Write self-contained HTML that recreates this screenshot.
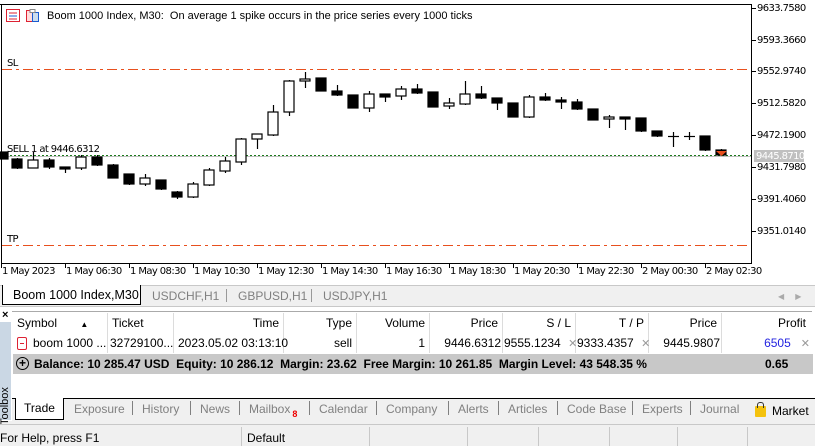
<!DOCTYPE html>
<html><head><meta charset="utf-8"><style>
*{margin:0;padding:0;box-sizing:border-box}
body{width:815px;height:446px;background:#f0f0f0;font-family:"Liberation Sans",sans-serif;position:relative;overflow:hidden;color:#000}
.a{position:absolute;white-space:nowrap}
.ax{font-size:10px;font-family:"DejaVu Sans","Liberation Sans",sans-serif;letter-spacing:-0.6px}
.t{font-size:12px}
.col{position:absolute;top:0;height:20px;border-right:1px solid #dcdcdc;font-size:12px;line-height:20px;padding:0 4px}
.g{color:#808080}
.bt{position:absolute;top:402px;font-size:12px;color:#808080}
.sp{position:absolute;top:401px;width:1px;height:14px;background:#808080}
</style></head><body>
<div class="a" style="left:0;top:0;width:815px;height:285px;background:#fff"></div>
<svg class="a" style="left:0;top:0" width="815" height="285">
<line x1="0" y1="4.5" x2="752" y2="4.5" stroke="#000"/>
<line x1="1.5" y1="4" x2="1.5" y2="264" stroke="#000"/>
<line x1="751.5" y1="4" x2="751.5" y2="264" stroke="#000"/>
<line x1="1" y1="263.5" x2="752" y2="263.5" stroke="#000"/>
<line x1="2" y1="69.5" x2="751" y2="69.5" stroke="#e8501e" stroke-dasharray="10,4,3,4"/>
<line x1="2" y1="245.5" x2="751" y2="245.5" stroke="#e8501e" stroke-dasharray="10,4,3,4"/>
<line x1="2" y1="156.5" x2="751" y2="156.5" stroke="#c0c0c0"/>
<line x1="2" y1="155.5" x2="751" y2="155.5" stroke="#1a7a1a" stroke-dasharray="2,2"/>
<g stroke="#000" stroke-width="1">
<line x1="752" y1="8.5" x2="756" y2="8.5"/><line x1="752" y1="40.5" x2="756" y2="40.5"/><line x1="752" y1="71.5" x2="756" y2="71.5"/><line x1="752" y1="103.5" x2="756" y2="103.5"/><line x1="752" y1="135.5" x2="756" y2="135.5"/><line x1="752" y1="167.5" x2="756" y2="167.5"/><line x1="752" y1="199.5" x2="756" y2="199.5"/><line x1="752" y1="231.5" x2="756" y2="231.5"/>
<line x1="1.5" y1="264" x2="1.5" y2="268"/><line x1="65.5" y1="264" x2="65.5" y2="268"/><line x1="129.5" y1="264" x2="129.5" y2="268"/><line x1="193.5" y1="264" x2="193.5" y2="268"/><line x1="257.5" y1="264" x2="257.5" y2="268"/><line x1="321.5" y1="264" x2="321.5" y2="268"/><line x1="385.5" y1="264" x2="385.5" y2="268"/><line x1="449.5" y1="264" x2="449.5" y2="268"/><line x1="513.5" y1="264" x2="513.5" y2="268"/><line x1="577.5" y1="264" x2="577.5" y2="268"/><line x1="641.5" y1="264" x2="641.5" y2="268"/><line x1="705.5" y1="264" x2="705.5" y2="268"/>
</g>
<g id="c" stroke="#000" stroke-width="1.2"></g>
<path d="M716 151h11l-5.5 5z" fill="#e8501e"/>
<rect x="754" y="150" width="50" height="12" fill="#c0c0c0"/>
</svg>
<script>
var C=[[3,152,159,1,152,159],[17,159,168,1,158,169],[33,160,168,0,152,168],[49,160,167,1,158,169],[65,167,169,1,167,173],[81,157,168,0,155,170],[97,157,165,1,155,166],[113,165,178,1,164,178],[129,174,184,1,174,185],[145,178,184,0,174,186],[161,180,189,1,180,190],[177,192,197,1,191,199],[193,184,197,0,182,198],[209,170,185,0,168,186],[225,161,171,0,157,173],[241,139,162,0,138,165],[257,134,139,0,134,149],[273,112,135,0,105,136],[289,81,112,0,80,116],[305,79,81,0,72,88],[321,78,91,1,78,91],[337,91,95,1,85,96],[353,95,108,1,95,108],[369,94,108,0,91,112],[385,94,97,1,94,102],[401,89,96,0,86,100],[417,89,93,1,84,94],[433,92,107,1,92,107],[449,103,106,0,98,109],[465,94,104,0,81,105],[481,94,98,1,86,99],[497,98,103,1,98,110],[513,103,117,1,103,117],[529,97,117,0,95,118],[545,97,100,1,93,101],[561,100,102,1,97,109],[577,102,109,1,99,110],[593,109,120,1,109,120],[609,117,119,0,115,128],[625,117,119,1,117,130],[641,118,131,1,118,132],[657,131,136,1,131,137],[673,136,136,1,132,147],[689,136,136,1,132,140],[705,136,150,1,136,151],[721,150,155,1,149,156]];
var s='';C.forEach(function(c){var x=c[0];s+='<line x1="'+(x+.5)+'" y1="'+c[4]+'" x2="'+(x+.5)+'" y2="'+c[5]+'"/>';if(c[1]==c[2])s+='<line x1="'+(x-5)+'" y1="'+(c[1]+.5)+'" x2="'+(x+6)+'" y2="'+(c[1]+.5)+'"/>';else s+='<rect x="'+(x-5)+'" y="'+c[1]+'" width="10" height="'+(c[2]-c[1])+'" fill="'+(c[3]?'#000':'#fff')+'"/>';});
document.getElementById('c').innerHTML=s;
</script>
<svg class="a" style="left:6px;top:9px" width="34" height="14">
<rect x="0.5" y="0.5" width="13" height="12" fill="#fff" stroke="#d23"/><line x1="3" y1="4" x2="11" y2="4" stroke="#d23"/><line x1="3" y1="7" x2="11" y2="7" stroke="#1a5bd0"/><line x1="3" y1="10" x2="11" y2="10" stroke="#d23"/>
<rect x="20.5" y="1.5" width="6" height="11" fill="#fdd" stroke="#d23"/><rect x="26.5" y="3.5" width="6" height="9" fill="#cde" stroke="#1a5bd0"/><rect x="24" y="0.5" width="5" height="3" fill="#fff" stroke="#888"/>
</svg>
<div class="a t" style="left:47px;top:10px;font-size:11px">Boom 1000 Index, M30:&nbsp; On average 1 spike occurs in the price series every 1000 ticks</div>
<div class="a ax" style="left:7px;top:58px">SL</div>
<div class="a ax" style="left:7px;top:144px">SELL 1 at 9446.6312</div>
<div class="a ax" style="left:7px;top:234px">TP</div>
<div class="a ax" style="left:757px;top:3px">9633.7580</div>
<div class="a ax" style="left:757px;top:35px">9593.3660</div>
<div class="a ax" style="left:757px;top:66px">9552.9740</div>
<div class="a ax" style="left:757px;top:98px">9512.5820</div>
<div class="a ax" style="left:757px;top:130px">9472.1900</div>
<div class="a ax" style="left:756px;top:151px;color:#fff">9445.8710</div>
<div class="a ax" style="left:757px;top:162px">9431.7980</div>
<div class="a ax" style="left:757px;top:194px">9391.4060</div>
<div class="a ax" style="left:757px;top:226px">9351.0140</div>
<div class="a ax" style="left:2px;top:266px">1 May 2023</div>
<div class="a ax" style="left:66px;top:266px">1 May 06:30</div>
<div class="a ax" style="left:130px;top:266px">1 May 08:30</div>
<div class="a ax" style="left:194px;top:266px">1 May 10:30</div>
<div class="a ax" style="left:258px;top:266px">1 May 12:30</div>
<div class="a ax" style="left:322px;top:266px">1 May 14:30</div>
<div class="a ax" style="left:386px;top:266px">1 May 16:30</div>
<div class="a ax" style="left:450px;top:266px">1 May 18:30</div>
<div class="a ax" style="left:514px;top:266px">1 May 20:30</div>
<div class="a ax" style="left:578px;top:266px">1 May 22:30</div>
<div class="a ax" style="left:642px;top:266px">2 May 00:30</div>
<div class="a ax" style="left:706px;top:266px">2 May 02:30</div>
<!-- chart tabs -->
<div class="a" style="left:0;top:285px;width:815px;height:21px;background:#f0f0f0;border-top:1px solid #c8c8c8"></div>
<div class="a" style="left:2px;top:285px;width:139px;height:20px;background:#fff;border:1px solid #000;border-top:none;padding:3px 0 0 10px;font-size:12.5px">Boom 1000 Index,M30</div>
<div class="a t g" style="left:152px;top:289px">USDCHF,H1</div>
<div class="a" style="left:226px;top:289px;width:1px;height:13px;background:#999"></div>
<div class="a t g" style="left:238px;top:289px">GBPUSD,H1</div>
<div class="a" style="left:311px;top:289px;width:1px;height:13px;background:#999"></div>
<div class="a t g" style="left:323px;top:289px">USDJPY,H1</div>
<div class="a" style="left:778px;top:292px;font-size:8px;color:#aaa">◀&nbsp;&nbsp;&nbsp;&nbsp;&nbsp;▶</div>
<!-- toolbox -->
<div class="a" style="left:0;top:306px;width:815px;height:115px;background:#fff;border-top:1px solid #c8c8c8"></div>
<div class="a" style="left:0;top:322px;width:11px;height:98px;background:#cad7e4"></div>
<div class="a" style="left:2px;top:309px;font-size:11px;font-weight:bold">×</div>
<div class="a" style="left:-20px;top:394px;width:50px;font-size:11px;transform:rotate(-90deg);transform-origin:center">Toolbox</div>
<div class="a" style="left:12px;top:311px;width:800px;height:1px;background:#aaa"></div>
<div class="a" style="left:13px;top:313px;width:800px;height:20px">
<div class="col" style="left:0;width:95px">Symbol&nbsp;&nbsp;&nbsp;&nbsp;&nbsp;&nbsp;&nbsp;<span style="font-size:8px">▲</span></div>
<div class="col" style="left:95px;width:66px">Ticket</div>
<div class="col" style="left:161px;width:110px;text-align:right">Time</div>
<div class="col" style="left:271px;width:73px;text-align:right">Type</div>
<div class="col" style="left:344px;width:73px;text-align:right">Volume</div>
<div class="col" style="left:417px;width:73px;text-align:right">Price</div>
<div class="col" style="left:490px;width:73px;text-align:right">S / L</div>
<div class="col" style="left:563px;width:73px;text-align:right">T / P</div>
<div class="col" style="left:636px;width:73px;text-align:right">Price</div>
<div class="col" style="left:709px;width:88px;text-align:right;border:none">Profit</div>
</div>
<div class="a" style="left:13px;top:333px;width:800px;height:20px">
<div class="col" style="left:0;width:95px;padding-left:20px">boom 1000 ...</div>
<div class="col" style="left:95px;width:66px;padding:0 2px">32729100...</div>
<div class="col" style="left:161px;width:110px;text-align:right">2023.05.02 03:13:10</div>
<div class="col" style="left:271px;width:73px;text-align:right">sell</div>
<div class="col" style="left:344px;width:73px;text-align:right">1</div>
<div class="col" style="left:417px;width:73px;text-align:right;padding:0 1px">9446.6312</div>
<div class="col" style="left:490px;width:73px;padding:0 1px">9555.1234 <span style="color:#999;font-size:11px;margin-left:4px">✕</span></div>
<div class="col" style="left:563px;width:73px;padding:0 1px">9333.4357 <span style="color:#999;font-size:11px;margin-left:4px">✕</span></div>
<div class="col" style="left:636px;width:73px;text-align:right;padding:0 1px">9445.9807</div>
<div class="col" style="left:709px;width:88px;text-align:right;border:none;padding-right:0"><span style="color:#2323e0">6505</span>&nbsp;&nbsp;&nbsp;<span style="color:#999;font-size:11px">✕</span></div>
</div>
<div class="a" style="left:17px;top:337px;width:10px;height:13px;border:1px solid #d23;border-radius:2px"><div style="position:absolute;left:2px;top:5px;width:4px;height:1px;background:#d23"></div></div>
<div class="a" style="left:13px;top:354px;width:800px;height:20px;background:#c8c8c8;font-size:12px;font-weight:bold;line-height:20px;padding-left:21px">Balance: 10 285.47 USD&nbsp; Equity: 10 286.12&nbsp; Margin: 23.62&nbsp; Free Margin: 10 261.85&nbsp; Margin Level: 43 548.35 %<span style="position:absolute;left:752px">0.65</span></div>
<div class="a" style="left:16px;top:357px;width:13px;height:13px;border:1px solid #000;border-radius:50%;font-size:12px;line-height:10px;text-align:center;font-weight:bold">+</div>
<!-- bottom tabs -->
<div class="a" style="left:12px;top:398px;width:803px;height:1px;background:#000"></div>
<div class="a" style="left:12px;top:399px;width:803px;height:22px;background:#f0f0f0"></div>
<div class="a t" style="left:15px;top:398px;width:49px;height:22px;background:#fff;border:1px solid #000;border-top:none;text-align:center;line-height:20px">Trade</div>
<div class="bt" style="left:74px">Exposure</div><div class="sp" style="left:132px"></div>
<div class="bt" style="left:142px">History</div><div class="sp" style="left:190px"></div>
<div class="bt" style="left:200px">News</div><div class="sp" style="left:239px"></div>
<div class="bt" style="left:249px">Mailbox<span style="color:#e00;font-size:9px;position:relative;top:4px;font-weight:bold;margin-left:2px">8</span></div><div class="sp" style="left:309px"></div>
<div class="bt" style="left:319px">Calendar</div><div class="sp" style="left:376px"></div>
<div class="bt" style="left:386px">Company</div><div class="sp" style="left:448px"></div>
<div class="bt" style="left:458px">Alerts</div><div class="sp" style="left:498px"></div>
<div class="bt" style="left:508px">Articles</div><div class="sp" style="left:557px"></div>
<div class="bt" style="left:567px">Code Base</div><div class="sp" style="left:632px"></div>
<div class="bt" style="left:642px">Experts</div><div class="sp" style="left:690px"></div>
<div class="bt" style="left:700px">Journal</div>
<div class="a" style="left:755px;top:406px;width:11px;height:11px;background:#f4c20d;border-radius:1px"></div>
<div class="a" style="left:757px;top:402px;width:7px;height:6px;border:1.5px solid #333;border-bottom:none;border-radius:3px 3px 0 0"></div>
<div class="a t" style="left:772px;top:404px">Market</div>
<!-- status -->
<div class="a" style="left:0;top:424px;width:815px;height:1px;background:#c8c8c8"></div>
<div class="a t" style="left:0;top:431px">For Help, press F1</div>
<div class="a" style="left:241px;top:427px;width:1px;height:19px;background:#c8c8c8"></div>
<div class="a t" style="left:247px;top:431px">Default</div>
<div class="a" style="left:369px;top:427px;width:1px;height:19px;background:#c8c8c8"></div>
<div class="a" style="left:467px;top:427px;width:1px;height:19px;background:#c8c8c8"></div>
<div class="a" style="left:538px;top:427px;width:1px;height:19px;background:#c8c8c8"></div>
<div class="a" style="left:609px;top:427px;width:1px;height:19px;background:#c8c8c8"></div>
<div class="a" style="left:677px;top:427px;width:1px;height:19px;background:#c8c8c8"></div>
<div class="a" style="left:747px;top:427px;width:1px;height:19px;background:#c8c8c8"></div>
</body></html>
